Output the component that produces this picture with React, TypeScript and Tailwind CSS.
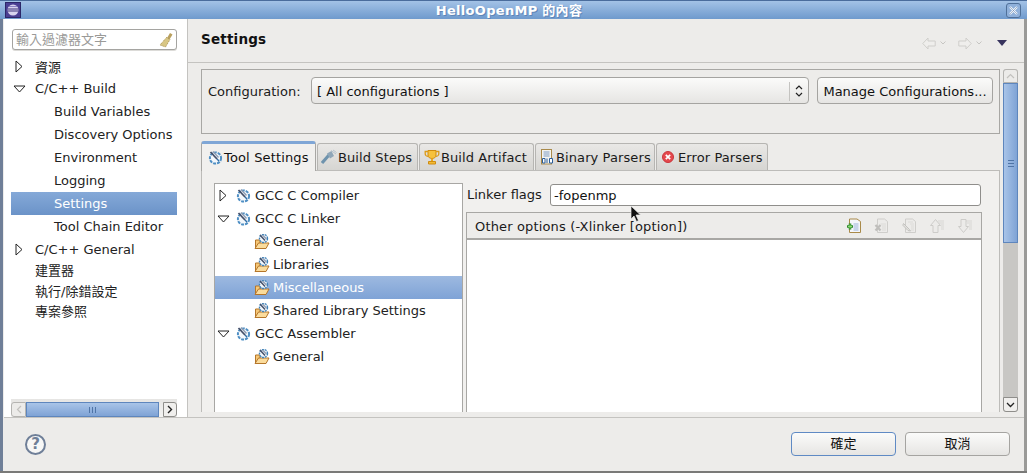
import React from 'react';

function Arrow({ open }: { open?: boolean }) {
  return open ? (
    <svg width="13" height="8" viewBox="0 0 13 8" className="shrink-0">
      <path d="M1 1 H12 L6.5 7 Z" fill="white" stroke="#222" strokeWidth="1" />
    </svg>
  ) : (
    <svg width="8" height="13" viewBox="0 0 8 13" className="shrink-0">
      <path d="M1 1 V12 L7 6.5 Z" fill="white" stroke="#222" strokeWidth="1" />
    </svg>
  );
}

function GearIcon() {
  return (
    <svg width="15" height="15" viewBox="0 0 15 15" className="shrink-0">
      <circle cx="7.5" cy="8" r="5.6" fill="#f4f8fc" stroke="#4f8fc4" strokeWidth="2" strokeDasharray="3 1" />
      <path d="M2.5 2 L9 9" stroke="#44506a" strokeWidth="1.8" />
      <path d="M5 1.5 L10.5 7.5" stroke="#8f9db3" strokeWidth="1.4" />
      <path d="M9 9 L11 11" stroke="#2f6da5" strokeWidth="1.5" />
    </svg>
  );
}

function FolderIcon() {
  return (
    <svg width="16" height="16" viewBox="0 0 16 16" className="shrink-0">
      <path d="M1.5 6 H6 V14.5 H1.5 Z" fill="#f6c877" stroke="#b5762a" />
      <path d="M1 14.5 L4.5 9 H15 L12 14.5 Z" fill="#fbdc9c" stroke="#b5762a" />
      <circle cx="9.5" cy="4.5" r="4" fill="#f4f8fc" stroke="#3f83bb" strokeWidth="1.4" strokeDasharray="2 .8" />
      <path d="M6 1 L11 6.5" stroke="#44506a" strokeWidth="1.5" />
      <path d="M8.5 1 L12.5 5" stroke="#8f9db3" strokeWidth="1.2" />
    </svg>
  );
}

function HammerIcon() {
  return (
    <svg width="16" height="16" viewBox="0 0 16 16" className="shrink-0">
      <path d="M1 14 L8 6" stroke="#6f93ad" strokeWidth="3.2" />
      <path d="M6 4.5 L10.5 2 L13 7 L9 9.5 Z" fill="#8fa6b8" />
      <path d="M10 1.5 L15 5 M12 1 L15.5 3.5" stroke="#b5c2cc" strokeWidth="1" />
    </svg>
  );
}

function TrophyIcon() {
  return (
    <svg width="16" height="16" viewBox="0 0 16 16" className="shrink-0">
      <path d="M4 1.5 H12 V6 C12 8.5 10 9.5 8 9.5 C6 9.5 4 8.5 4 6 Z" fill="#f7c23c" stroke="#cf8c10" />
      <path d="M4 2.5 H1.2 V5 C1.2 6.5 3 7.5 4.5 7.5 M12 2.5 H14.8 V5 C14.8 6.5 13 7.5 11.5 7.5" fill="none" stroke="#dc9a16" strokeWidth="1.3" />
      <path d="M7 9.5 H9 V12 H7 Z" fill="#e9aa22" />
      <path d="M4.5 12.5 H11.5 V15 H4.5 Z" fill="#f4bb34" stroke="#cf8c10" />
    </svg>
  );
}

function BinaryIcon() {
  return (
    <svg width="13" height="16" viewBox="0 0 13 16" className="shrink-0">
      <rect x=".5" y=".5" width="10" height="14.5" fill="#f4f4f0" stroke="#a98a4a" />
      <path d="M2.5 3 H8.5 M2.5 5 H8.5 M2.5 7 H8.5" stroke="#7f9cc4" />
      <path d="M1.5 9.5 H4 V14 H1.5 Z M6 9.5 V14 M8.5 9.5 H11.5 V14 H8.5 Z" fill="#fff" stroke="#2a5d9a" strokeWidth="1" />
    </svg>
  );
}

function ErrorIcon() {
  return (
    <svg width="12" height="12" viewBox="0 0 12 12" className="shrink-0">
      <circle cx="6" cy="6" r="5.5" fill="#e5484d" stroke="#c9363b" />
      <path d="M3.8 3.8 L8.2 8.2 M8.2 3.8 L3.8 8.2" stroke="white" strokeWidth="1.7" />
    </svg>
  );
}

function ToolbarDoc({ kind }: { kind: 'add' | 'remove' | 'edit' | 'up' | 'down' }) {
  if (kind === 'add') {
    return (
      <svg width="16" height="16" viewBox="0 0 16 16">
        <path d="M3.5 1 H11 L14.5 3.5 V14.5 H3.5 Z" fill="#f4f6fb" stroke="#a98a4a" />
        <path d="M7.5 6 H12.5 M7.5 8 H12.5 M7.5 10 H12.5 M7.5 12 H12.5" stroke="#9bb4d8" />
        <path d="M4 5.5 V11.5 M1 8.5 H7" stroke="#2c8a2c" strokeWidth="2.6" />
        <path d="M4 6.5 V10.5 M2 8.5 H6" stroke="#8fdc70" strokeWidth="1" />
      </svg>
    );
  }
  return (
    <svg width="16" height="16" viewBox="0 0 16 16">
      {kind === 'remove' && (
        <g>
          <path d="M3.5 1 H10.5 L13.5 3.5 V14.5 H3.5 Z" fill="#ecebe9" stroke="#cfcecb" />
          <path d="M6.5 6 H12 M8 8 H12 M8 10 H12 M8 12 H12" stroke="#dcdbd8" />
          <path d="M1.5 7 L6.5 12.5 M6.5 7 L1.5 12.5" stroke="#bfbebb" strokeWidth="2.2" />
        </g>
      )}
      {kind === 'edit' && (
        <g>
          <path d="M3.5 1 H10.5 L13.5 3.5 V14.5 H3.5 Z" fill="#ecebe9" stroke="#cfcecb" />
          <path d="M6 4 H11 M8 6 H12 M9 8 H12 M9 10 H12 M9 12 H12" stroke="#dcdbd8" />
          <path d="M1.5 5.5 L7.5 11.5 L8.5 13 L6 12.5 L.8 7.2 Z" fill="#e3e2df" stroke="#c3c2bf" />
        </g>
      )}
      {kind === 'up' && (
        <g>
          <path d="M8 3 H14 M9 5 H14 M11 7 H14 M11 9 H14 M11 11 H14" stroke="#d8d7d4" />
          <path d="M5.5 1.5 L10.5 7.5 H8 V14.5 H3 V7.5 H.5 Z" fill="#ecebe9" stroke="#cdccc9" />
        </g>
      )}
      {kind === 'down' && (
        <g>
          <path d="M8 3 H14 M9 5 H14 M11 7 H14 M11 9 H14 M11 11 H14" stroke="#d8d7d4" />
          <path d="M3 1.5 H8 V8.5 H10.5 L5.5 14.5 L.5 8.5 H3 Z" fill="#ecebe9" stroke="#cdccc9" />
        </g>
      )}
    </svg>
  );
}

function NavArrow({ right }: { right?: boolean }) {
  return (
    <div className="flex items-center gap-[4px]">
      <svg width="14" height="13" viewBox="0 0 14 13" className={right ? '-scale-x-100' : ''}>
        <path d="M.8 6.5 L6 1 V4 H13.2 V9 H6 V12 Z" fill="#efeeec" stroke="#cfcecb" />
      </svg>
      <svg width="6" height="4" viewBox="0 0 6 4">
        <path d="M.5 .5 L3 3 L5.5 .5" fill="none" stroke="#c6c5c2" />
      </svg>
    </div>
  );
}

function SideRow({ label, arrow, open, depth, selected, h = 'h-[23px]' }: { label: string; arrow?: boolean; open?: boolean; depth?: boolean; selected?: boolean; h?: string }) {
  return (
    <div className={`flex items-center ${h} ${selected ? 'bg-linear-to-b from-[#85a9d8] to-[#6b93c8] text-white' : 'text-[#222]'} ${depth ? 'pl-[43px]' : 'pl-[24px]'} relative`}>
      {arrow && (
        <span className="absolute left-[-2px] top-0 bottom-0 w-[20px] flex items-center justify-center">
          <Arrow open={open} />
        </span>
      )}
      {label}
    </div>
  );
}

function TreeRow({ label, open, arrow, selected }: { label: string; open?: boolean; arrow?: boolean; selected?: boolean }) {
  return (
    <div className={`flex items-center h-[23px] ${selected ? 'bg-linear-to-b from-[#9db9e0] to-[#7fa3d6] text-white' : 'text-[#222]'} ${arrow ? 'pl-[1px]' : 'pl-[39px]'}`}>
      {arrow ? (
        <>
          <span className="w-[14px] flex items-center justify-center shrink-0">
            <Arrow open={open} />
          </span>
          <span className="ml-[6px] mr-[4px]"><GearIcon /></span>
        </>
      ) : (
        <span className="mr-[3px]"><FolderIcon /></span>
      )}
      {label}
    </div>
  );
}

function Tab({ label, icon, active, w, pl }: { label: string; icon: React.ReactNode; active?: boolean; w: string; pl?: string }) {
  if (active) {
    return (
      <div className={`${w} h-[30px] -mb-px relative z-10 flex items-center gap-[1px] pl-[6px] pb-[1px] tracking-[0.15px] bg-[#f1f0ee] border border-[#a8a7a4] border-b-0 rounded-t-[3px] border-t-[3px] border-t-[#7fa6d6] text-[#111]`}>
        {icon}
        {label}
      </div>
    );
  }
  return (
    <div className={`${w} ${pl} h-[27px] flex items-center gap-[1px] tracking-[0.1px] bg-linear-to-b from-[#e9e8e6] to-[#d6d5d2] border border-[#b6b5b2] border-b-0 rounded-t-[3px] text-[#1a1a1a]`}>
      {icon}
      {label}
    </div>
  );
}

export default function App() {
  return (
    <div className="w-[1027px] h-[473px] bg-[#edecea] overflow-hidden flex flex-col relative font-['DejaVu_Sans','Noto_Sans_CJK_TC',sans-serif] text-[13px] leading-none whitespace-nowrap border-b-2 border-[#7a7a78]">
      {/* title bar */}
      <div className="h-[19px] shrink-0 relative flex items-center justify-center bg-linear-to-b from-[#a3c2e6] to-[#6f9acd] border-t border-[#4a6c9c]">
        <div className="absolute left-[5px] top-[1px] w-[16px] h-[16px] bg-[#4a3f93] border border-[#2c2768] flex items-center justify-center">
          <svg width="12" height="12" viewBox="0 0 12 12">
            <circle cx="6" cy="6" r="5.5" fill="#d8d4ee" />
            <path d="M.5 5 H11.5 M.5 7 H11.5" stroke="#3a3078" strokeWidth="1" />
            <path d="M2 2.5 H10" stroke="#8d82c4" />
          </svg>
        </div>
        <span className="font-bold text-[13px] tracking-[0.3px] text-white [text-shadow:1px_1px_0_#5f86b8] mt-[1px] mr-[9px]">HelloOpenMP 的內容</span>
        <div className="absolute right-[6px] top-[2px] w-[15px] h-[15px] border border-[#4f7099] rounded-[3px] flex items-center justify-center bg-[#8fb0da]">
          <svg width="9" height="9" viewBox="0 0 9 9">
            <path d="M1 1 L8 8 M8 1 L1 8" stroke="#f4f7fb" strokeWidth="2" />
            <path d="M1 1 L8 8 M8 1 L1 8" stroke="#52739f" strokeWidth=".5" />
          </svg>
        </div>
      </div>

      {/* body */}
      <div className="flex-1 min-h-0 flex flex-col border-x-[3px] border-[#8a8a88] border-l-[#6f7f98] border-r-[#9a9a98]">
        <div className="flex h-[398px] shrink-0">
          <div className="w-[184px] ml-[1px] shrink-0 bg-white flex flex-col border-r border-[#c4c3c0] pt-[10px] pl-[7px] pr-[10px]">
            <div className="h-[21px] w-[165px] shrink-0 ml-[1px] border border-[#a5a4a1] rounded-[3px] bg-white shadow-[0_1px_0_#dcdbd8] flex items-center justify-between pl-[3px] pr-[2px] text-[#9a9a98]">
              輸入過濾器文字
              <svg width="15" height="16" viewBox="0 0 15 16">
                <path d="M11 1 L13.5 2.5 L10.5 7.5 L8 6 Z" fill="#b9a05e" />
                <path d="M7.5 5.5 L11 7.5 L6.5 15 L1 13 Z" fill="#d8c684" stroke="#a78f4c" strokeDasharray="1 1" />
              </svg>
            </div>
            <div className="mt-[5px] w-[166px]">
              <SideRow label="資源" arrow h="h-[23px] pt-[2px]" />
              <SideRow label="C/C++ Build" arrow open h="h-[22px] pb-[2px]" />
              <SideRow label="Build Variables" depth />
              <SideRow label="Discovery Options" depth />
              <SideRow label="Environment" depth />
              <SideRow label="Logging" depth />
              <SideRow label="Settings" depth selected />
              <SideRow label="Tool Chain Editor" depth />
              <SideRow label="C/C++ General" arrow />
              <SideRow label="建置器" h="h-[21px] pb-[2px]" />
              <SideRow label="執行/除錯設定" h="h-[20px] pb-[2px]" />
              <SideRow label="專案參照" h="h-[20px] pb-[2px]" />
            </div>
            <div className="mt-auto w-[166px] h-[18px] pt-[3px] shrink-0 flex bg-linear-to-b from-[#e6e5e3] to-[#f4f4f3]">
              <div className="w-[15px] border border-[#b5b4b1] rounded-l-[3px] bg-[#ecebe9] flex items-center justify-center">
                <svg width="6" height="9" viewBox="0 0 6 9"><path d="M5 1 L1.5 4.5 L5 8" fill="none" stroke="#c2c1be" strokeWidth="1.2" /></svg>
              </div>
              <div className="w-[133px] bg-linear-to-b from-[#a9c4e8] to-[#7fa3d5] border border-[#5e86bd] flex items-center justify-center gap-[2px]">
                <span className="w-px h-[6px] bg-[#4f74a6]" /><span className="w-px h-[6px] bg-[#4f74a6]" /><span className="w-px h-[6px] bg-[#4f74a6]" />
              </div>
              <div className="w-[14px] ml-[4px] border border-[#8f8e8b] rounded-r-[3px] bg-[#f0efed] flex items-center justify-center">
                <svg width="6" height="9" viewBox="0 0 6 9"><path d="M1 1 L4.5 4.5 L1 8" fill="none" stroke="#222" strokeWidth="1.4" /></svg>
              </div>
            </div>
          </div>

          {/* right side */}
          <div className="flex-1 min-w-0 flex flex-col">
            <div className="h-[44px] shrink-0 border-b border-[#c4c3c0] flex items-center pl-[13px] pr-[17px] pb-[2px]">
              <span className="font-bold text-[13.5px] tracking-[0.2px] text-[#111]">Settings</span>
              <div className="ml-auto flex items-center mt-[7px]">
                <NavArrow />
                <span className="w-[12px]" />
                <NavArrow right />
                <svg width="10" height="6" viewBox="0 0 10 6" className="ml-[15px]"><path d="M0 0 H10 L5 6 Z" fill="#38345e" /></svg>
              </div>
            </div>
            <div className="flex flex-1 min-h-0 pt-[6px] pb-[5px] pl-[13px]">
              <div className="w-[799px] shrink-0 flex flex-col">
                <div className="h-[65px] shrink-0 border border-[#a8a7a4] bg-[#edecea] flex items-start pt-[7px] pl-[6px]">
                  <span className="h-[27px] pt-[2px] flex items-center text-[#1a1a1a] w-[103px]">Configuration:</span>
                  <div className="w-[498px] h-[27px] pt-[1px] border border-[#a5a4a1] rounded-[4px] bg-linear-to-b from-[#fbfbfa] to-[#e6e5e3] flex items-center pl-[5px] text-[#111]">
                    <span className="mt-[1px]">[ All configurations ]</span>
                    <div className="ml-auto w-[19px] h-[19px] border-l border-[#c4c3c0] flex items-center justify-center">
                      <svg width="8" height="12" viewBox="0 0 8 12"><path d="M1 4 L4 1 L7 4 M1 8 L4 11 L7 8" fill="none" stroke="#222" strokeWidth="1.2" /></svg>
                    </div>
                  </div>
                  <div className="ml-[8px] w-[176px] h-[27px] pt-[2px] border border-[#a5a4a1] rounded-[4px] bg-linear-to-b from-[#fbfbfa] to-[#e6e5e3] flex items-center justify-center text-[#111]">Manage Configurations...</div>
                </div>

                <div className="flex items-end mt-[6px] h-[30px] shrink-0 gap-[1px]">
                  <Tab active w="w-[115px]" label="Tool Settings" icon={<GearIcon />} />
                  <Tab w="w-[101px]" pl="pl-[3px]" label="Build Steps" icon={<HammerIcon />} />
                  <Tab w="w-[115px]" pl="pl-[4px]" label="Build Artifact" icon={<TrophyIcon />} />
                  <Tab w="w-[120px]" pl="pl-[5px]" label="Binary Parsers" icon={<span className="mr-[1px]"><BinaryIcon /></span>} />
                  <Tab w="w-[112px]" pl="pl-[5px]" label="Error Parsers" icon={<span className="mr-[3px]"><ErrorIcon /></span>} />
                </div>

                <div className="flex-1 min-h-0 border border-[#bdbcb9] border-b-0 bg-[#f1f0ee] flex pl-[12px] pt-[12px] overflow-hidden">
                  <div className="w-[249px] shrink-0 border border-[#a8a7a4] border-b-0 bg-white">
                    <TreeRow label="GCC C Compiler" arrow />
                    <TreeRow label="GCC C Linker" arrow open />
                    <TreeRow label="General" />
                    <TreeRow label="Libraries" />
                    <TreeRow label="Miscellaneous" selected />
                    <TreeRow label="Shared Library Settings" />
                    <TreeRow label="GCC Assembler" arrow open />
                    <TreeRow label="General" />
                  </div>
                  <div className="w-[519px] ml-[3px] flex flex-col">
                    <div className="flex items-center h-[23px] shrink-0 pl-px text-[#1a1a1a]">
                      <span className="w-[83px]">Linker flags</span>
                      <div className="w-[431px] h-[22px] mt-[1px] border border-[#8f8e8b] rounded-[3px] bg-white flex items-center pl-[3px] text-[#111]">-fopenmp</div>
                    </div>
                    <div className="mt-[6px] flex-1 w-[516px] border border-[#a8a7a4] border-b-0 flex flex-col">
                      <div className="h-[27px] shrink-0 border-b-[2px] border-[#a8a7a4] flex items-center pl-[8px] bg-[#edecea] text-[#1a1a1a]">
                        <span className="mt-[2px] tracking-[0.15px]">Other options (-Xlinker [option])</span>
                        <div className="ml-auto flex gap-[12px] pr-[7px]">
                          <ToolbarDoc kind="add" />
                          <ToolbarDoc kind="remove" />
                          <ToolbarDoc kind="edit" />
                          <ToolbarDoc kind="up" />
                          <ToolbarDoc kind="down" />
                        </div>
                      </div>
                      <div className="flex-1 bg-white" />
                    </div>
                  </div>
                </div>
              </div>

              {/* vertical scrollbar */}
              <div className="w-[15px] ml-[3px] shrink-0 flex flex-col bg-[#c8c7c4] rounded-[3px]">
                <div className="h-[14px] border border-[#b5b4b1] rounded-t-[3px] bg-[#ecebe9] flex items-center justify-center">
                  <svg width="9" height="6" viewBox="0 0 9 6"><path d="M1 5 L4.5 1.5 L8 5" fill="none" stroke="#c2c1be" strokeWidth="1.2" /></svg>
                </div>
                <div className="h-[160px] bg-linear-to-r from-[#a9c4e8] to-[#7fa3d5] border border-[#5e86bd] flex flex-col items-center justify-center gap-[2px]">
                  <span className="h-px w-[6px] bg-[#4f74a6]" /><span className="h-px w-[6px] bg-[#4f74a6]" /><span className="h-px w-[6px] bg-[#4f74a6]" />
                </div>
                <div className="mt-auto h-[15px] border border-[#8f8e8b] rounded-b-[3px] bg-[#f0efed] flex items-center justify-center">
                  <svg width="9" height="6" viewBox="0 0 9 6"><path d="M1 1 L4.5 4.5 L8 1" fill="none" stroke="#222" strokeWidth="1.3" /></svg>
                </div>
              </div>
            </div>
          </div>
        </div>

        {/* footer */}
        <div className="flex-1 ml-[1px] border-t border-[#c4c3c0] bg-[#edecea] flex items-center pl-[21px] pr-[14px]">
          <div className="w-[21px] h-[21px] rounded-full border-2 border-[#6f7f98] bg-[#f7f7f6] flex items-center justify-center font-bold text-[#6f7f98] text-[15px]">?</div>
          <div className="ml-auto flex gap-[9px] mb-[2px]">
            <div className="w-[105px] h-[24px] border border-[#5f8ac4] rounded-[4px] bg-linear-to-b from-[#fbfbfa] to-[#e6e5e3] flex items-center justify-center text-[#111]">確定</div>
            <div className="w-[105px] h-[24px] border border-[#a5a4a1] rounded-[4px] bg-linear-to-b from-[#fbfbfa] to-[#e6e5e3] flex items-center justify-center text-[#111]">取消</div>
          </div>
        </div>
      </div>

      {/* mouse pointer */}
      <svg width="12" height="18" viewBox="0 0 12 18" className="absolute left-[630px] top-[205px]">
        <path d="M1 1 V14 L4 11 L6.5 16.5 L8.5 15.5 L6 10 H10.5 Z" fill="#111" stroke="#eee" strokeWidth=".7" />
      </svg>
    </div>
  );
}
